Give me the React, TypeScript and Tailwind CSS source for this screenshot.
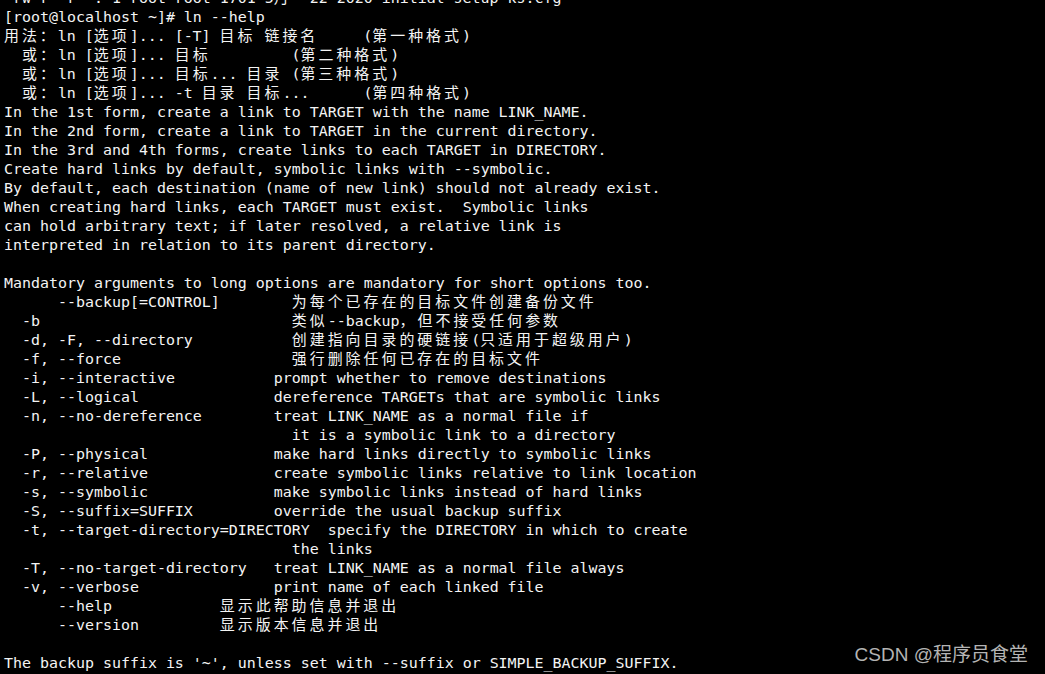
// Terminal window showing `ln --help` output (zh_CN locale)

const lines = [
  '-rw-r--r--. 1 root root 1701 5月  22 2020 initial-setup-ks.cfg',
  '[root@localhost ~]# ln --help',
  '用法：ln [选项]... [-T] 目标 链接名     (第一种格式)',
  '  或：ln [选项]... 目标         (第二种格式)',
  '  或：ln [选项]... 目标... 目录 (第三种格式)',
  '  或：ln [选项]... -t 目录 目标...      (第四种格式)',
  'In the 1st form, create a link to TARGET with the name LINK_NAME.',
  'In the 2nd form, create a link to TARGET in the current directory.',
  'In the 3rd and 4th forms, create links to each TARGET in DIRECTORY.',
  'Create hard links by default, symbolic links with --symbolic.',
  'By default, each destination (name of new link) should not already exist.',
  'When creating hard links, each TARGET must exist.  Symbolic links',
  'can hold arbitrary text; if later resolved, a relative link is',
  'interpreted in relation to its parent directory.',
  '',
  'Mandatory arguments to long options are mandatory for short options too.',
  '      --backup[=CONTROL]        为每个已存在的目标文件创建备份文件',
  '  -b                            类似--backup，但不接受任何参数',
  '  -d, -F, --directory           创建指向目录的硬链接(只适用于超级用户)',
  '  -f, --force                   强行删除任何已存在的目标文件',
  '  -i, --interactive           prompt whether to remove destinations',
  '  -L, --logical               dereference TARGETs that are symbolic links',
  '  -n, --no-dereference        treat LINK_NAME as a normal file if',
  '                                it is a symbolic link to a directory',
  '  -P, --physical              make hard links directly to symbolic links',
  '  -r, --relative              create symbolic links relative to link location',
  '  -s, --symbolic              make symbolic links instead of hard links',
  '  -S, --suffix=SUFFIX         override the usual backup suffix',
  '  -t, --target-directory=DIRECTORY  specify the DIRECTORY in which to create',
  '                                the links',
  '  -T, --no-target-directory   treat LINK_NAME as a normal file always',
  '  -v, --verbose               print name of each linked file',
  '      --help            显示此帮助信息并退出',
  '      --version         显示版本信息并退出',
  '',
  "The backup suffix is '~', unless set with --suffix or SIMPLE_BACKUP_SUFFIX.",
]

// Wide (CJK) characters take two terminal cells, so split them out
function TermLine({ text }: { text: string }) {
  const parts = text.match(/[\x00-\x7f]+|[^\x00-\x7f]+/g) ?? []

  return (
    <div className="h-[19px] leading-[19px] whitespace-pre">
      {parts.map((part, i) =>
        /^[\x00-\x7f]/.test(part) ? (
          <span key={i}>{part}</span>
        ) : (
          // zero line-height keeps the CJK font from pushing the baseline down
          <span
            key={i}
            className="font-['Noto_Sans_CJK_SC',sans-serif] leading-[0px] tracking-[3px]"
          >
            {part}
          </span>
        )
      )}
      {text === '' && ' '}
    </div>
  )
}

export default function App() {
  return (
    <div className="relative h-screen w-full overflow-hidden bg-black">
      <div className="-mt-[11px] pl-[4px] font-['DejaVu_Sans_Mono','Liberation_Mono',monospace] text-[14.95px] text-[#f4f4f4]">
        {lines.map((line, i) => (
          <TermLine key={i} text={line} />
        ))}
      </div>

      {/* blog watermark */}
      <div className="absolute right-[17px] bottom-[10px] font-['Liberation_Sans','Noto_Sans_CJK_SC',sans-serif] text-[19px] leading-none text-[#b4b4b4]">
        CSDN @程序员食堂
      </div>
    </div>
  )
}
